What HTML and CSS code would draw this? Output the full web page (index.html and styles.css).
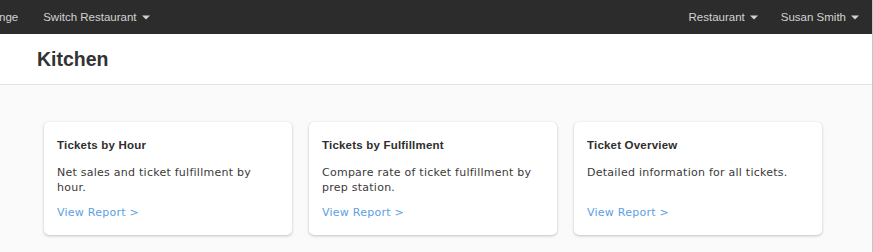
FILE: index.html
```html
<!DOCTYPE html>
<html>
<head>
<meta charset="utf-8">
<link rel="stylesheet" href="styles.css">
</head>
<body>
<div class="frame">
  <nav class="topbar">
    <div class="nav-left">
      <span class="nav-item clipped">nge</span>
      <span class="nav-item">Switch Restaurant <svg class="caret" width="8" height="5" viewBox="0 0 8 5"><path d="M0 0.5 L8 0.5 L4 4.5 Z" fill="currentColor"/></svg></span>
    </div>
    <div class="nav-right">
      <span class="nav-item">Restaurant <svg class="caret" width="8" height="5" viewBox="0 0 8 5"><path d="M0 0.5 L8 0.5 L4 4.5 Z" fill="currentColor"/></svg></span>
      <span class="nav-item">Susan Smith <svg class="caret" width="8" height="5" viewBox="0 0 8 5"><path d="M0 0.5 L8 0.5 L4 4.5 Z" fill="currentColor"/></svg></span>
    </div>
  </nav>
  <header class="page-header">
    <h1>Kitchen</h1>
  </header>
  <main class="content">
    <div class="cards">
      <div class="card">
        <h2>Tickets by Hour</h2>
        <p>Net sales and ticket fulfillment by hour.</p>
        <a class="link" href="#">View Report &gt;</a>
      </div>
      <div class="card">
        <h2>Tickets by Fulfillment</h2>
        <p>Compare rate of ticket fulfillment by prep station.</p>
        <a class="link" href="#">View Report &gt;</a>
      </div>
      <div class="card">
        <h2>Ticket Overview</h2>
        <p>Detailed information for all tickets.</p>
        <a class="link" href="#">View Report &gt;</a>
      </div>
    </div>
  </main>
</div>
</body>
</html>
```
FILE: styles.css
```css
* { box-sizing: border-box; }
html, body { margin: 0; padding: 0; }
body {
  width: 873px;
  height: 252px;
  overflow: hidden;
  font-family: "Liberation Sans", Arial, sans-serif;
  background: #fafafa;
}
.frame {
  height: 252px;
  border-right: 1px solid #c6c6c6;
  display: flex;
  flex-direction: column;
}
.topbar {
  height: 34px;
  background: #2c2c2c;
  color: #d2d2d2;
  font-size: 11.5px;
  display: flex;
  align-items: center;
  justify-content: space-between;
  padding: 0 13px 0 0;
}
.nav-left, .nav-right {
  display: flex;
  align-items: center;
}
.nav-left { gap: 25px; }
.nav-right { gap: 23px; }
.nav-item {
  display: flex;
  align-items: center;
  gap: 5px;
  white-space: nowrap;
}
.clipped { margin-left: -1px; }
.caret { display: block; }
.page-header {
  height: 51px;
  background: #ffffff;
  border-bottom: 1px solid #e2e2e2;
  padding: 0 0 0 37px;
  display: flex;
  align-items: center;
}
.page-header h1 {
  margin: 0;
  font-size: 19.5px;
  font-weight: bold;
  color: #333333;
  padding-top: 1px;
}
.content {
  flex: 1;
  background: #fafafa;
  padding: 37px 0 0 44px;
}
.cards {
  display: grid;
  grid-template-columns: repeat(3, 248px);
  gap: 17px;
}
.card {
  background: #ffffff;
  border-radius: 5px;
  box-shadow: 0 1px 3px rgba(0,0,0,0.22), 0 0 1px rgba(0,0,0,0.08);
  padding: 16px 14px 15px 13px;
  height: 113px;
  display: flex;
  flex-direction: column;
}
.card h2 {
  margin: 0;
  font-size: 11.5px;
  font-weight: bold;
  color: #2e2e2e;
  line-height: 15px;
  letter-spacing: 0.2px;
}
.card p {
  margin: 12px 0 0 0;
  font-family: "DejaVu Sans", Verdana, sans-serif;
  font-size: 11px;
  line-height: 15px;
  color: #3a3a3a;
  letter-spacing: 0.25px;
  height: 30px;
}
.link {
  margin-top: 10px;
  font-family: "DejaVu Sans", Verdana, sans-serif;
  font-size: 11px;
  line-height: 15px;
  color: #5ba0e6;
  text-decoration: none;
  letter-spacing: 0.25px;
}
```
